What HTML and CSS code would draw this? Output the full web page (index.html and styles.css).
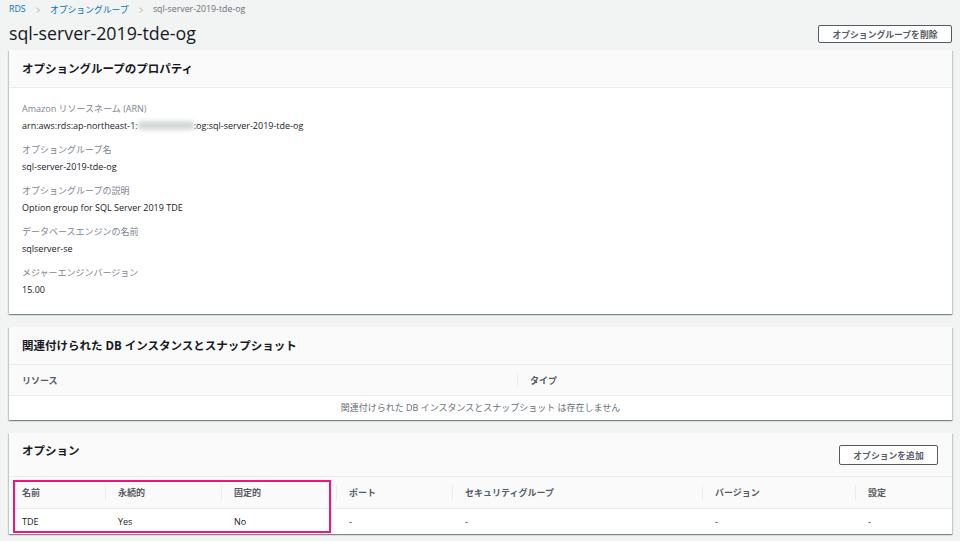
FILE: index.html
```html
<!DOCTYPE html>
<html lang="ja">
<head>
<meta charset="utf-8">
<title>sql-server-2019-tde-og</title>
<link rel="stylesheet" href="styles.css">
</head>
<body>
<div class="page">
  <nav class="breadcrumb">
    <a class="crumb-link">RDS</a>
    <span class="sep">&gt;</span>
    <a class="crumb-link">オプショングループ</a>
    <span class="sep">&gt;</span>
    <span class="crumb-current">sql-server-2019-tde-og</span>
  </nav>
  <div class="page-head">
    <h1 class="page-title">sql-server-2019-tde-og</h1>
    <button class="btn btn-head">オプショングループを削除</button>
  </div>

  <section class="panel">
    <div class="panel-header"><h2 class="panel-title">オプショングループのプロパティ</h2></div>
    <div class="panel-body props">
      <div class="kv">
        <div class="kv-label">Amazon リソースネーム (ARN)</div>
        <div class="kv-value">arn:aws:rds:ap-northeast-1:<span class="blur" aria-hidden="true"></span>:og:sql-server-2019-tde-og</div>
      </div>
      <div class="kv">
        <div class="kv-label">オプショングループ名</div>
        <div class="kv-value">sql-server-2019-tde-og</div>
      </div>
      <div class="kv">
        <div class="kv-label">オプショングループの説明</div>
        <div class="kv-value">Option group for SQL Server 2019 TDE</div>
      </div>
      <div class="kv">
        <div class="kv-label">データベースエンジンの名前</div>
        <div class="kv-value">sqlserver-se</div>
      </div>
      <div class="kv">
        <div class="kv-label">メジャーエンジンバージョン</div>
        <div class="kv-value">15.00</div>
      </div>
    </div>
  </section>

  <section class="panel">
    <div class="panel-header"><h2 class="panel-title">関連付けられた DB インスタンスとスナップショット</h2></div>
    <div class="table table-assoc">
      <div class="th">リソース</div>
      <div class="th divided">タイプ</div>
      <div class="empty">関連付けられた DB インスタンスとスナップショット は存在しません</div>
    </div>
  </section>

  <section class="panel">
    <div class="panel-header header-action">
      <h2 class="panel-title">オプション</h2>
      <button class="btn btn-add">オプションを追加</button>
    </div>
    <div class="table-wrap">
      <div class="table table-options">
        <div class="th">名前</div>
        <div class="th divided">永続的</div>
        <div class="th divided">固定的</div>
        <div class="th divided">ポート</div>
        <div class="th divided">セキュリティグループ</div>
        <div class="th divided">バージョン</div>
        <div class="th divided">設定</div>
        <div class="td">TDE</div>
        <div class="td">Yes</div>
        <div class="td">No</div>
        <div class="td">-</div>
        <div class="td">-</div>
        <div class="td">-</div>
        <div class="td">-</div>
      </div>
      <div class="highlight"></div>
    </div>
  </section>
</div>
</body>
</html>
```

FILE: styles.css
```css
* { box-sizing: border-box; }
html, body { margin: 0; padding: 0; }
body {
  background: #f2f3f3;
  font-family: "Open Sans", "Noto Sans CJK JP", sans-serif;
  color: #16191f;
  width: 960px;
  height: 541px;
  overflow: hidden;
}
.page {
  padding: 0 8px 0 9px;
}
.breadcrumb {
  display: flex;
  align-items: center;
  height: 17px;
  font-size: 8.8px;
  padding-top: 1px;
}
.crumb-link { color: #0073bb; }
.sep {
  color: #aab7b8;
  font-size: 11px;
  margin: 0 9px;
  transform: scaleX(0.7);
  display: inline-block;
}
.crumb-current { color: #687078; }

.page-head {
  display: flex;
  justify-content: space-between;
  align-items: flex-start;
  height: 33px;
}
.page-title {
  margin: 0;
  font-size: 17.8px;
  font-weight: 400;
  line-height: 34px;
  margin-top: -1px;
  color: #16191f;
}
.btn {
  background: #fff;
  border: 1px solid #545b64;
  color: #545b64;
  font-family: inherit;
  font-weight: 700;
  font-size: 8.8px;
  padding: 0;
  border-radius: 2px;
}
.btn-head {
  width: 134px;
  height: 18px;
  margin-top: 8px;
}
.btn-add {
  width: 99px;
  height: 20px;
}

.panel {
  background: #fff;
  box-shadow: 0 1px 1px 0 rgba(0,28,36,0.3), 1px 1px 1px 0 rgba(0,28,36,0.15), -1px 1px 1px 0 rgba(0,28,36,0.15);
  margin-bottom: 13px;
}
.panel-header {
  background: #fafafa;
  border-bottom: 1px solid #eaeded;
  height: 38px;
  display: flex;
  align-items: center;
  padding: 0 13px;
}
.header-action {
  height: 44px;
  justify-content: space-between;
  align-items: flex-start;
  padding: 12px 14px 0 13px;
}
.header-action .panel-title { margin-top: -2px; }
.panel-title {
  margin: 0;
  font-size: 11.5px;
  font-weight: 700;
  line-height: 16px;
  color: #16191f;
}

.props {
  padding: 12px 13px 16px;
  display: flex;
  flex-direction: column;
  gap: 7px;
}
.kv-label {
  color: #7d8590;
  font-size: 9px;
  line-height: 17px;
}
.kv-value {
  font-size: 9px;
  line-height: 17px;
  color: #16191f;
}
.blur {
  background: #d5d8d9;
  filter: blur(2px);
  border-radius: 3px;
  display: inline-block;
  width: 56px;
  height: 9px;
  vertical-align: -1px;
}

.table {
  display: grid;
  font-size: 9px;
}
.table-assoc {
  grid-template-columns: 508px 1fr;
}
.table-options {
  grid-template-columns: 96px 116px 115px 116px 250px 153px 1fr;
}
.th {
  background: #fafafa;
  border-bottom: 1px solid #eaeded;
  color: #545b64;
  font-weight: 700;
  padding: 0 13px;
  position: relative;
  display: flex;
  align-items: center;
}
.table-assoc .th { height: 31px; }
.table-options .th { height: 32px; }
.divided::before {
  content: "";
  position: absolute;
  left: 0;
  top: 8px;
  bottom: 8px;
  width: 1px;
  background: #eaeded;
}
.empty {
  grid-column: 1 / -1;
  text-align: center;
  color: #687078;
  height: 24px;
  line-height: 24px;
}
.td {
  height: 25px;
  display: flex;
  align-items: center;
  padding: 0 13px;
  color: #16191f;
}
.table-wrap { position: relative; }
.highlight {
  position: absolute;
  left: 4px;
  top: 3px;
  width: 318px;
  height: 53px;
  border: 2px solid #f0157a;
  pointer-events: none;
}
```
